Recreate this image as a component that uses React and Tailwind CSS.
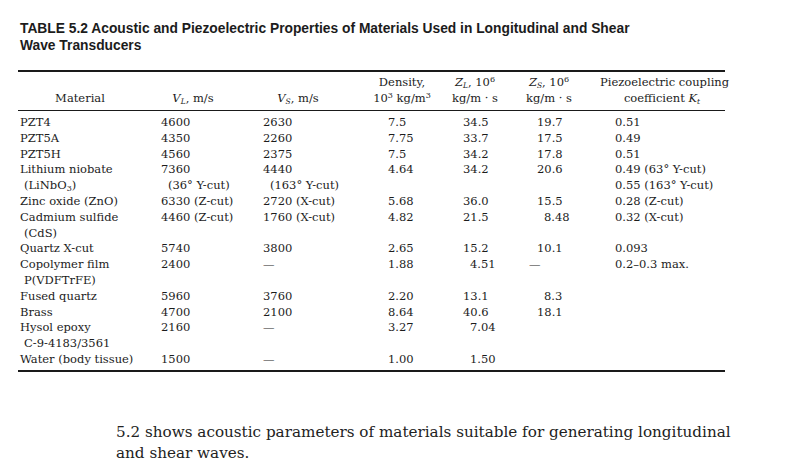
import React from "react";

const I = ({ children }) => <span className="italic">{children}</span>;
const Sub = ({ children }) => (
  <sub className="italic text-[7.5px]">{children}</sub>
);

const rows = [
  ["PZT4", "4600", "2630", "7.5", "34.5", "19.7", "0.51"],
  ["PZT5A", "4350", "2260", "7.75", "33.7", "17.5", "0.49"],
  ["PZT5H", "4560", "2375", "7.5", "34.2", "17.8", "0.51"],
  ["Lithium niobate", "7360", "4440", "4.64", "34.2", "20.6", "0.49 (63° Y-cut)"],
  [
    { t: <>(LiNbO<sub className="text-[8px]">3</sub>)</>, ind: true },
    { t: "(36° Y-cut)", ind: true },
    { t: "(163° Y-cut)", ind: true },
    "",
    "",
    "",
    "0.55 (163° Y-cut)",
  ],
  ["Zinc oxide (ZnO)", "6330 (Z-cut)", "2720 (X-cut)", "5.68", "36.0", "15.5", "0.28 (Z-cut)"],
  ["Cadmium sulfide", "4460 (Z-cut)", "1760 (X-cut)", "4.82", "21.5", { t: "8.48", ind: true }, "0.32 (X-cut)"],
  [{ t: "(CdS)", ind: true }, "", "", "", "", "", ""],
  ["Quartz X-cut", "5740", "3800", "2.65", "15.2", "10.1", "0.093"],
  ["Copolymer film", "2400", "—", "1.88", { t: "4.51", ind: true }, { t: "—", neg: true }, "0.2–0.3 max."],
  [{ t: "P(VDFTrFE)", ind: true }, "", "", "", "", "", ""],
  ["Fused quartz", "5960", "3760", "2.20", "13.1", { t: "8.3", ind: true }, ""],
  ["Brass", "4700", "2100", "8.64", "40.6", "18.1", ""],
  ["Hysol epoxy", "2160", "—", "3.27", { t: "7.04", ind: true }, "", ""],
  [{ t: "C-9-4183/3561", ind: true }, "", "", "", "", "", ""],
  ["Water (body tissue)", "1500", "—", "1.00", { t: "1.50", ind: true }, "", ""],
];

function Cell({ v, first }) {
  const obj = typeof v === "object" && v !== null && !React.isValidElement(v) ? v : { t: v };
  let cls = "whitespace-nowrap h-[15.8px]";
  if (first) cls += obj.ind ? " pl-[6px]" : " pl-[2px]";
  else if (obj.ind) cls += " pl-[7px]";
  if (obj.neg) cls += " ml-[-8px]";
  return <div className={cls}>{obj.t}</div>;
}

export default function App() {
  return (
    <div className="w-[793px] h-[475px] bg-white text-[#1c1c1c] overflow-hidden">
      <div className="pt-[20px] pl-[20px] font-['Liberation_Sans',Arial,sans-serif] font-bold text-[13.8px] leading-[17px]">
        TABLE 5.2 Acoustic and Piezoelectric Properties of Materials Used in Longitudinal and Shear
        <br />
        Wave Transducers
      </div>

      <div className="ml-[18px] w-[707px] mt-[16px] font-['DejaVu_Serif',serif] text-[11.5px] leading-[15.8px]">
        <div className="h-[2px] bg-[#1a1a1a]" />
        <div className="flex items-end pt-[3px] pb-[3px]">
          <div className="w-[124px] text-center">Material</div>
          <div className="w-[102px] text-center whitespace-nowrap">
            <I>V</I>
            <Sub>L</Sub>, m/s
          </div>
          <div className="w-[108px] text-center whitespace-nowrap">
            <I>V</I>
            <Sub>S</Sub>, m/s
          </div>
          <div className="w-[100px] text-center whitespace-nowrap">
            Density,
            <br />
            10<sup className="text-[8px]">3</sup> kg/m<sup className="text-[8px]">3</sup>
          </div>
          <div className="w-[46px] text-center whitespace-nowrap">
            <I>Z</I>
            <Sub>L</Sub>, 10<sup className="text-[8px]">6</sup>
            <br />
            kg/m · s
          </div>
          <div className="w-[102px] text-center whitespace-nowrap">
            <I>Z</I>
            <Sub>S</Sub>, 10<sup className="text-[8px]">6</sup>
            <br />
            kg/m · s
          </div>
          <div className="w-[124px] text-center whitespace-nowrap">
            Piezoelectric coupling
            <br />
            coefficient <I>K</I>
            <Sub>t</Sub>
          </div>
        </div>
        <div className="h-[1.5px] bg-[#1a1a1a]" />
        <div className="grid grid-cols-[143px_102px_125px_75px_74px_78px_110px] pt-[4px] pb-[2px]">
          {rows.map((r, i) =>
            r.map((v, j) => <Cell key={i + "-" + j} v={v} first={j === 0} />)
          )}
        </div>
        <div className="h-[2px] bg-[#1a1a1a]" />
      </div>

      <p className="mt-[50px] ml-[116px] font-['DejaVu_Serif',serif] text-[15.2px] leading-[21px] text-[#222] whitespace-nowrap">
        5.2 shows acoustic parameters of materials suitable for generating longitudinal
        <br />
        and shear waves.
      </p>
    </div>
  );
}
